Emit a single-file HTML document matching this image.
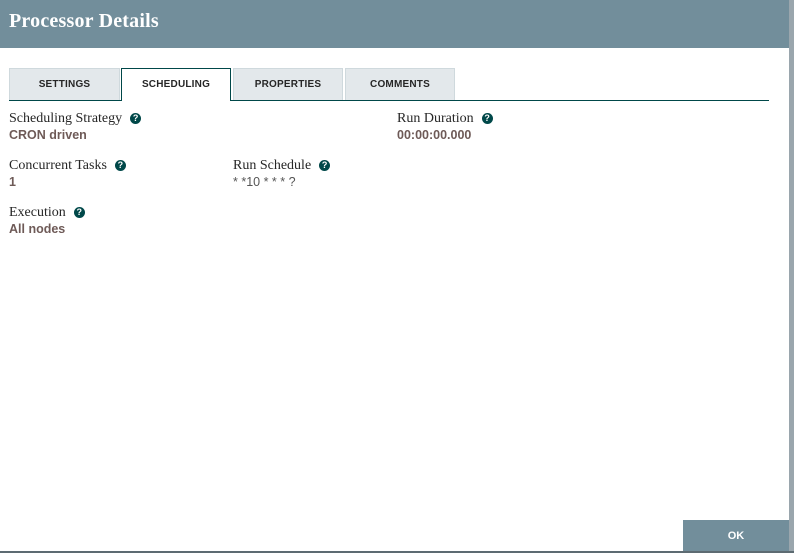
<!DOCTYPE html>
<html><head><style>
body{margin:0;width:794px;height:553px;background:#9aa6ad;position:relative;overflow:hidden;font-family:"Liberation Sans",sans-serif}
#dlg{position:absolute;left:0;top:0;width:789px;height:551px;background:#fff}
#hdr{position:absolute;left:0;top:0;width:789px;height:48px;background:#728e9b;color:#fff;font-family:"Liberation Serif",serif;font-weight:bold;font-size:20px;line-height:42px;padding-left:9px;box-sizing:border-box;letter-spacing:0.2px}
.tab{position:absolute;top:68px;height:32px;box-sizing:border-box;background:#e3e8eb;border:1px solid #cfd9dd;border-bottom:none;font-size:10px;font-weight:bold;color:#262626;text-align:center;line-height:31px;letter-spacing:0.2px}
.tab.act{background:#fff;border:1px solid #004849;border-bottom:none;height:33px;z-index:2}
#line{position:absolute;left:9px;top:100px;width:760px;height:1px;background:#004849}
.lbl{position:absolute;font-family:"Liberation Serif",serif;font-size:14px;color:#262626}
.val{position:absolute;font-size:12.5px;font-weight:bold;color:#6e5a57}
.q{display:inline-block;width:11px;height:11px;border-radius:50%;background:#004849;color:#fff;font-size:9px;line-height:11px;text-align:center;font-weight:bold;font-family:"Liberation Sans",sans-serif;vertical-align:1px;margin-left:8px}
#ok{position:absolute;left:683px;top:520px;width:106px;height:31px;background:#728e9b;color:#fff;font-weight:bold;font-size:11px;text-align:center;line-height:33px}
#bot{position:absolute;left:0;top:551px;width:794px;height:2px;background:#5d6b72}
</style></head><body>
<div id="dlg">
<div id="hdr">Processor Details</div>
<div class="tab" style="left:9px;width:111px">SETTINGS</div>
<div class="tab act" style="left:121px;width:110px">SCHEDULING</div>
<div class="tab" style="left:233px;width:110px">PROPERTIES</div>
<div class="tab" style="left:345px;width:110px">COMMENTS</div>
<div id="line"></div>
<div class="lbl" style="left:9px;top:111px">Scheduling Strategy<span class="q">?</span></div>
<div class="val" style="left:9px;top:128px">CRON driven</div>
<div class="lbl" style="left:397px;top:111px">Run Duration<span class="q">?</span></div>
<div class="val" style="left:397px;top:128px">00:00:00.000</div>
<div class="lbl" style="left:9px;top:158px">Concurrent Tasks<span class="q">?</span></div>
<div class="val" style="left:9px;top:175px">1</div>
<div class="lbl" style="left:233px;top:158px">Run Schedule<span class="q">?</span></div>
<div class="val" style="left:233px;top:175px;font-weight:normal;color:#555">* *10 * * * ?</div>
<div class="lbl" style="left:9px;top:205px">Execution<span class="q">?</span></div>
<div class="val" style="left:9px;top:222px">All nodes</div>
<div id="ok">OK</div>
</div>
<div id="bot"></div>
</body></html>
